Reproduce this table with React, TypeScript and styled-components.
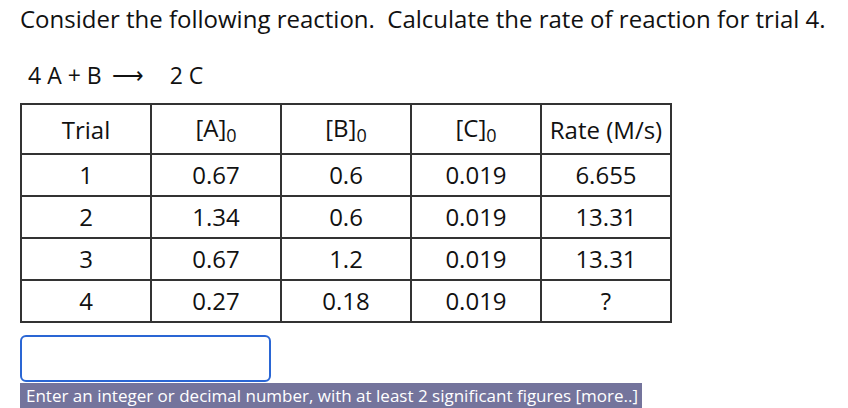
import styled, { createGlobalStyle } from "styled-components";

const GlobalStyle = createGlobalStyle`
  body {
    margin: 0;
    background: #fff;
    font-family: "Open Sans", "Noto Sans", sans-serif;
    color: #111;
  }
`;

const Page = styled.div`
  padding: 0 20px;
`;

const Question = styled.p`
  margin: 0;
  padding-top: 3px;
  font-size: 24px;
  line-height: 32px;
`;

const Equation = styled.div`
  display: flex;
  align-items: center;
  margin: 25px 0 0 8px;
  height: 30px;
  font-size: 23px;
`;

const Arrow = styled.span`
  margin: 0 26px 0 10px;
  font-size: 22px;
  font-family: "DejaVu Sans", sans-serif;
  font-weight: 300;
`;

const Table = styled.table`
  margin-top: 13px;
  border-collapse: collapse;
  font-size: 24px;
`;

const HeadCell = styled.th`
  border: 2px solid #333;
  width: 128px;
  height: 48px;
  font-weight: 400;
  text-align: center;
  padding: 0;
`;

const Cell = styled.td`
  border: 2px solid #333;
  height: 40px;
  line-height: 28px;
  text-align: center;
  padding: 0;
`;

const Sub = styled.sub`
  font-size: 18px;
  vertical-align: -5px;
`;

const Answer = styled.div`
  margin-top: 12px;
  display: flex;
  flex-direction: column;
  align-items: flex-start;
`;

const Input = styled.input`
  box-sizing: border-box;
  display: block;
  width: 251px;
  height: 47px;
  border: 2px solid #2a66d4;
  border-radius: 6px;
  outline: none;
  margin: 0;
`;

const Hint = styled.div`
  margin-top: 1px;
  background: #74749c;
  color: #fff;
  font-size: 17px;
  line-height: 25px;
  padding: 0 4px 0 6px;
  white-space: nowrap;
`;

const rows = [
  ["1", "0.67", "0.6", "0.019", "6.655"],
  ["2", "1.34", "0.6", "0.019", "13.31"],
  ["3", "0.67", "1.2", "0.019", "13.31"],
  ["4", "0.27", "0.18", "0.019", "?"],
];

function App() {
  return (
    <Page>
      <GlobalStyle />
      <Question>
        Consider the following reaction.&nbsp; Calculate the rate of reaction for trial 4.
      </Question>
      <Equation>
        <span>4 A + B</span>
        <Arrow>⟶</Arrow>
        <span>2 C</span>
      </Equation>
      <Table>
        <thead>
          <tr>
            <HeadCell>Trial</HeadCell>
            <HeadCell>
              [A]<Sub>0</Sub>
            </HeadCell>
            <HeadCell>
              [B]<Sub>0</Sub>
            </HeadCell>
            <HeadCell>
              [C]<Sub>0</Sub>
            </HeadCell>
            <HeadCell>Rate (M/s)</HeadCell>
          </tr>
        </thead>
        <tbody>
          {rows.map((r) => (
            <tr key={r[0]}>
              {r.map((v, i) => (
                <Cell key={i}>{v}</Cell>
              ))}
            </tr>
          ))}
        </tbody>
      </Table>
      <Answer>
        <Input type="text" />
        <Hint>Enter an integer or decimal number, with at least 2 significant figures [more..]</Hint>
      </Answer>
    </Page>
  );
}

export default App;
